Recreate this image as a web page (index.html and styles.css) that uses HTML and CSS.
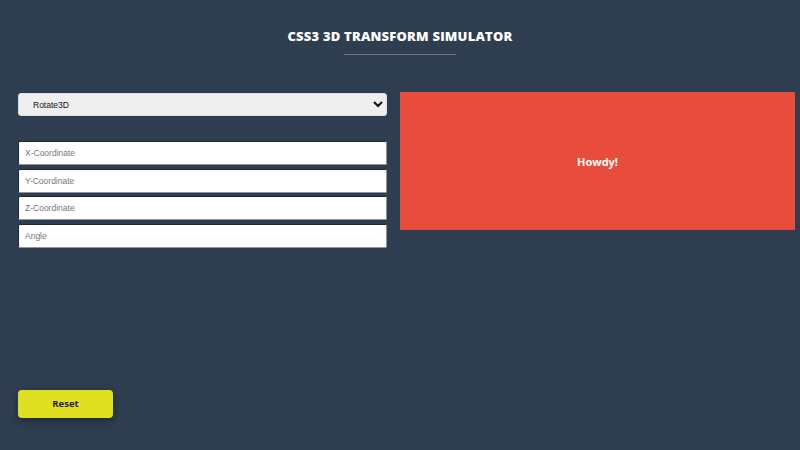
FILE: index.html
```html
<!DOCTYPE html>
<html lang="en">
<head>
  <meta charset="UTF-8" />
  <meta name="viewport" content="width=device-width, initial-scale=1.0" />
  <title>CSS3 3D Transform Simulator</title>
  <link rel="stylesheet" href="styles.css">
</head>
<body>
  <header class="header">
    <h1>CSS3 3D Transform Simulator</h1>
    <div class="line"></div>
  </header>

  <main class="main">
    <div class="controls">
      <select class="picker" id="tipo">
        <option value="rotate3d">Rotate3D</option>
        <option value="translate3d">Translate3D</option>
        <option value="scale3d">Scale3D</option>
      </select>

      <div class="fields">
        <input type="text" id="x" placeholder="X-Coordinate" />
        <input type="text" id="y" placeholder="Y-Coordinate" />
        <input type="text" id="z" placeholder="Z-Coordinate" />
        <input type="text" id="angle" placeholder="Angle" />
      </div>
    </div>

    <div class="stage">
      <div class="box" id="box">Howdy!</div>
    </div>
  </main>

  <div class="actions">
    <button type="button" id="reset">Reset</button>
  </div>

  <script>
    const box = document.getElementById("box");
    const inputs = ["x", "y", "z", "angle"].map(id => document.getElementById(id));

    function update() {
      const [x, y, z, a] = inputs.map(i => parseFloat(i.value) || 0);
      const tipo = document.getElementById("tipo").value;
      if (tipo === "rotate3d") box.style.transform = `rotate3d(${x}, ${y}, ${z}, ${a}deg)`;
      if (tipo === "translate3d") box.style.transform = `translate3d(${x}px, ${y}px, ${z}px)`;
      if (tipo === "scale3d") box.style.transform = `scale3d(${x || 1}, ${y || 1}, ${z || 1})`;
    }

    inputs.forEach(i => i.addEventListener("input", update));
    document.getElementById("tipo").addEventListener("change", update);
    document.getElementById("reset").addEventListener("click", () => {
      inputs.forEach(i => i.value = "");
      box.style.transform = "";
    });
  </script>
</body>
</html>
```

FILE: styles.css
```css
body {
  margin: 0;
  height: 450px;
  background: #2e3e50;
  font-family: "Liberation Sans", Arial, sans-serif;
  overflow: hidden;
}
.header {
  padding-top: 29px;
  text-align: center;
}
h1 {
  margin: 0;
  color: #fff;
  font-family: "Open Sans", Inter, sans-serif;
  font-weight: 800;
  font-size: 13px;
  letter-spacing: 0.2px;
  text-transform: uppercase;
  line-height: 15px;
}
.line {
  width: 112px;
  height: 1px;
  margin: 10px auto 0;
  background: #6b7a80;
}
.main {
  display: grid;
  grid-template-columns: 369px 395px;
  column-gap: 13px;
  padding: 37px 0 0 18px;
}
.controls {
  padding-top: 1px;
}
.picker {
  display: block;
  width: 100%;
  height: 23px;
  padding: 0 10px;
  background: #efefef;
  border: 1px solid #e0e0e0;
  border-radius: 3px;
  font-family: "Liberation Sans", Arial, sans-serif;
  font-size: 8.5px;
  color: #111;
}
.fields {
  display: flex;
  flex-direction: column;
  gap: 3.5px;
  margin-top: 25px;
}
.fields input {
  box-sizing: border-box;
  height: 24px;
  width: 100%;
  padding: 0 6px;
  background: #fff;
  border: 1px solid #1c2733;
  border-right-color: #8c949c;
  border-bottom-color: #8c949c;
  border-radius: 2px;
  font-family: "Liberation Sans", Arial, sans-serif;
  font-size: 8.5px;
}
.fields input::placeholder {
  color: #777;
}
.box {
  height: 138px;
  display: flex;
  align-items: center;
  justify-content: center;
  background: #e74c3c;
  color: #fff;
  font-family: "Open Sans", Inter, sans-serif;
  font-weight: 700;
  font-size: 11px;
}
.actions {
  padding: 142px 0 0 18px;
}
button {
  width: 95px;
  height: 28px;
  background: #e1e020;
  color: #222;
  border: none;
  border-radius: 4px;
  box-shadow: 0 3px 8px rgba(0,0,0,0.35);
  font-family: "Open Sans", Inter, sans-serif;
  font-weight: 700;
  font-size: 9.5px;
  cursor: pointer;
}
```
